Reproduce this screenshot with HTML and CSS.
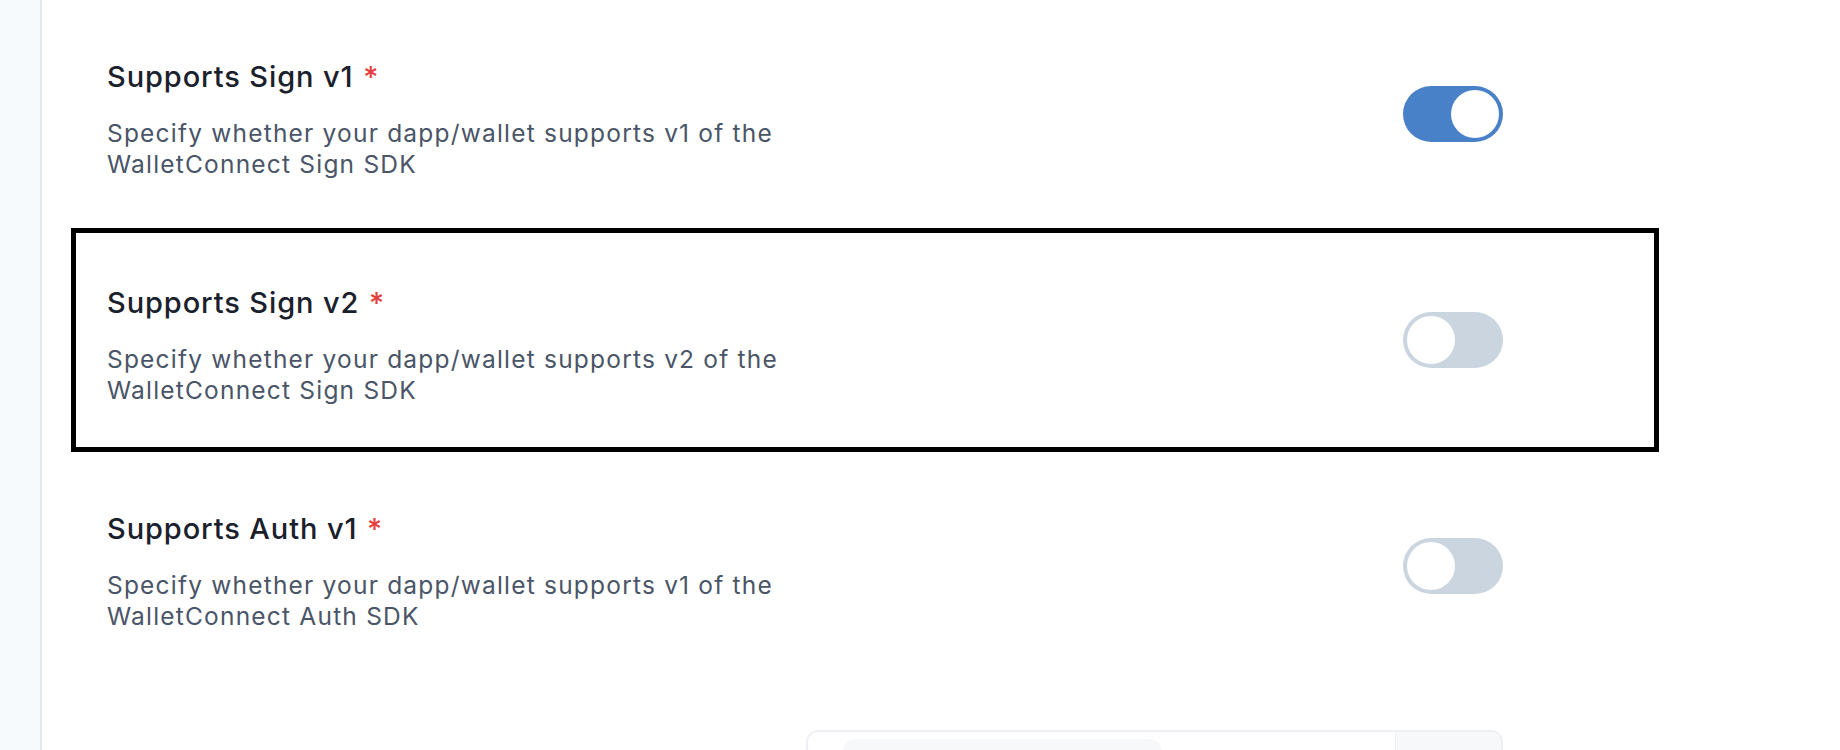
FILE: index.html
```html
<!DOCTYPE html>
<html lang="en">
<head>
<meta charset="utf-8">
<title>Supported SDKs</title>
<link rel="stylesheet" href="styles.css">
</head>
<body>
<div class="app">
  <aside class="sidebar"></aside>
  <main class="main">
    <div class="row">
      <div class="text">
        <div class="label">Supports Sign v1 <span class="req">*</span></div>
        <p class="desc">Specify whether your dapp/wallet supports v1 of the WalletConnect Sign SDK</p>
      </div>
      <div class="switch on"><span class="thumb"></span></div>
    </div>
    <div class="row focused">
      <div class="text">
        <div class="label">Supports Sign v2 <span class="req">*</span></div>
        <p class="desc">Specify whether your dapp/wallet supports v2 of the WalletConnect Sign SDK</p>
      </div>
      <div class="switch"><span class="thumb"></span></div>
    </div>
    <div class="row">
      <div class="text">
        <div class="label">Supports Auth v1 <span class="req">*</span></div>
        <p class="desc">Specify whether your dapp/wallet supports v1 of the WalletConnect Auth SDK</p>
      </div>
      <div class="switch"><span class="thumb"></span></div>
    </div>
    <div class="bottom">
      <div class="card">
        <div class="card-main"><div class="pill"></div></div>
        <div class="card-side"></div>
      </div>
    </div>
  </main>
</div>
</body>
</html>
```
FILE: styles.css
```css
* { box-sizing: border-box; }
html, body { margin: 0; padding: 0; }
body {
  background: #ffffff;
  font-family: Inter, "Noto Sans", "Liberation Sans", sans-serif;
  height: 750px;
  overflow: hidden;
}
.app {
  display: flex;
  height: 750px;
  overflow: hidden;
}
.sidebar {
  width: 42px;
  flex: none;
  background: #f7fafc;
  border-right: 2px solid #e2e8f0;
}
.main {
  flex: 1;
  padding: 2px 0 0 29px;
  display: flex;
  flex-direction: column;
  gap: 2px;
}
.row {
  flex: none;
  width: 1588px;
  height: 224px;
  border: 5px solid transparent;
  display: grid;
  grid-template-columns: 1fr auto;
  padding: 52px 151px 0 31px;
}
.row.focused { border-color: #000000; }
.text { align-self: start; }
.label {
  font-size: 29px;
  line-height: 36px;
  font-weight: 500;
  letter-spacing: 0.9px;
  color: #1a202c;
}
.req {
  color: #e53e3e;
  margin-left: 1px;
}
.desc {
  margin: 23px 0 0;
  font-size: 24.5px;
  line-height: 31px;
  letter-spacing: 1.2px;
  color: #4a5568;
  max-width: 720px;
}
.switch {
  align-self: center;
  margin-top: -52px;
  width: 100px;
  height: 56px;
  border-radius: 28px;
  padding: 4px;
  background: #cbd5e0;
  display: flex;
  justify-content: flex-start;
}
.switch.on {
  background: #4881c8;
  justify-content: flex-end;
}
.thumb {
  width: 48px;
  height: 48px;
  border-radius: 50%;
  background: #ffffff;
}
.bottom {
  flex: none;
  display: flex;
  padding-left: 735px;
  margin-top: 50px;
}
.card {
  width: 697px;
  height: 120px;
  border: 2px solid #eef0f6;
  border-radius: 12px;
  display: flex;
  overflow: hidden;
}
.card-main {
  flex: 1;
  padding: 7px 0 0 35px;
}
.pill {
  width: 319px;
  height: 60px;
  border-radius: 12px;
  background: #f7f8fa;
}
.card-side {
  width: 106px;
  background: #f7f8fa;
  border-left: 1px solid #eef0f6;
}
```
